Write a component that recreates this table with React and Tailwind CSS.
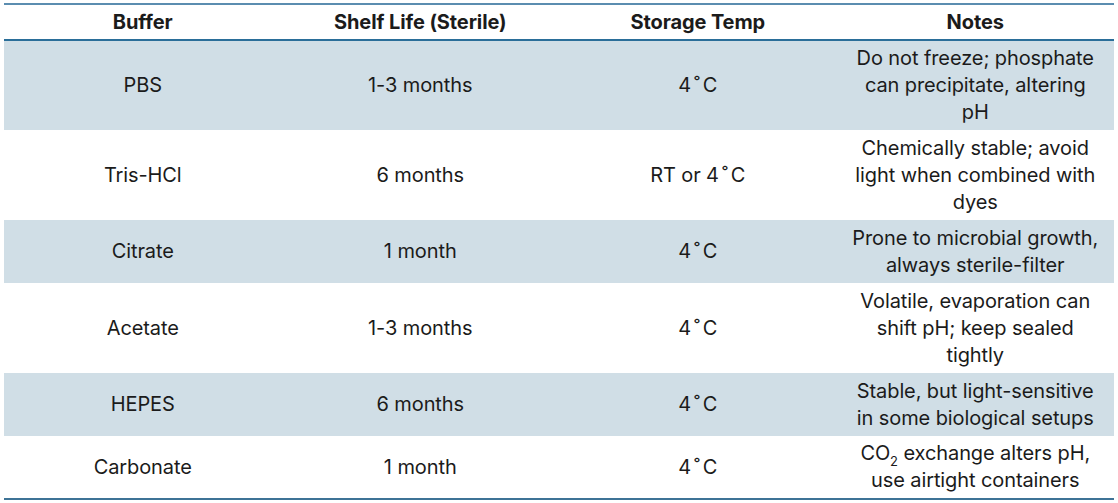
import React from "react";

const Deg = () => <span className="mx-[3px]">˚</span>;

const rows = [
  { buffer: "PBS", shelf: "1-3 months", temp: <>4<Deg />C</>, notes: ["Do not freeze; phosphate", "can precipitate, altering", "pH"], shade: true },
  { buffer: "Tris-HCl", shelf: "6 months", temp: <>RT or 4<Deg />C</>, notes: ["Chemically stable; avoid", "light when combined with", "dyes"] },
  { buffer: "Citrate", shelf: "1 month", temp: <>4<Deg />C</>, notes: ["Prone to microbial growth,", "always sterile-filter"], shade: true },
  { buffer: "Acetate", shelf: "1-3 months", temp: <>4<Deg />C</>, notes: ["Volatile, evaporation can", "shift pH; keep sealed", "tightly"] },
  { buffer: "HEPES", shelf: "6 months", temp: <>4<Deg />C</>, notes: ["Stable, but light-sensitive", "in some biological setups"], shade: true },
  {
    buffer: "Carbonate",
    shelf: "1 month",
    temp: <>4<Deg />C</>,
    notes: [
      <>CO<sub className="text-[0.65em] align-[-0.2em]">2</sub> exchange alters pH,</>,
      "use airtight containers",
    ],
  },
];

const Cell = ({ children }) => (
  <td className="px-2 py-0 text-center align-middle">{children}</td>
);

export default function App() {
  return (
    <div
      className="min-h-[503px] bg-white px-1 pt-[3px] text-[#1b1b1b]"
      style={{ fontFamily: "Inter, 'Noto Sans', sans-serif" }}
    >
      <table className="w-full table-fixed border-collapse text-[20px] leading-[27px] tracking-[-0.1px]">
        <thead>
          <tr className="border-t-2 border-t-[#5b8db0] border-b-2 border-b-[#2a6e99]">
            {["Buffer", "Shelf Life (Sterile)", "Storage Temp", "Notes"].map((h) => (
              <th key={h} className="h-[36px] px-2 text-center align-middle font-bold">
                {h}
              </th>
            ))}
          </tr>
        </thead>
        <tbody>
          {rows.map((r, i) => (
            <tr
              key={r.buffer}
              className={`${r.shade ? "bg-[#d0dee6]" : "bg-white"} ${
                r.notes.length === 3 ? "h-[90px]" : "h-[63px]"
              } ${i === rows.length - 1 ? "border-b-2 border-b-[#3e7396]" : ""}`}
            >
              <Cell>{r.buffer}</Cell>
              <Cell>{r.shelf}</Cell>
              <Cell>{r.temp}</Cell>
              <Cell>
                {r.notes.map((line, j) => (
                  <div key={j} className="whitespace-nowrap">{line}</div>
                ))}
              </Cell>
            </tr>
          ))}
        </tbody>
      </table>
    </div>
  );
}
